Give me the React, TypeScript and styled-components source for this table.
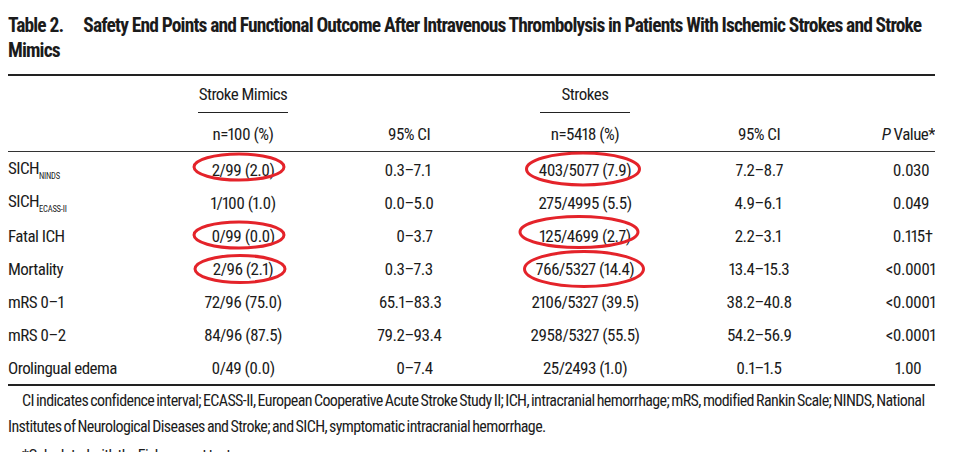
import React from "react";
import styled, { createGlobalStyle } from "styled-components";

const GlobalStyle = createGlobalStyle`
  html, body {
    margin: 0;
    padding: 0;
    background: #ffffff;
  }
  body {
    font-family: "Roboto Condensed", "Liberation Sans", sans-serif;
    font-variant-numeric: proportional-nums;
    color: #1b1b1b;
  }
`;

const Page = styled.main`
  width: 927px;
  padding: 13px 0 0 8px;
  overflow: hidden;
  height: 439px;
`;

const Title = styled.h1`
  margin: 0;
  font-size: 19.5px;
  line-height: 25px;
  font-weight: 700;
  letter-spacing: -0.85px;
  padding-bottom: 11px;
  border-bottom: 2.5px solid #222;
`;

const TitleLabel = styled.span`
  margin-right: 20px;
`;

const Row = styled.div<{ $height?: number }>`
  display: grid;
  grid-template-columns: 160px 150px 182px 170px 178px 87px;
  align-items: center;
  height: ${(p) => p.$height ?? 33}px;
  font-size: 17px;
  letter-spacing: -0.55px;
`;

const HeadRow = styled(Row)`
  border-bottom: 1px solid #333;
  margin-bottom: 1px;
`;

const Cell = styled.div<{ $align?: "left" | "center" | "right" }>`
  position: relative;
  text-align: ${(p) => p.$align ?? "center"};
  white-space: nowrap;
`;

const GroupHead = styled.span`
  display: inline-block;
  margin-top: 5px;
  padding: 0 1px 8px;
  border-bottom: 1.5px solid #222;
`;

const WideGroupHead = styled(GroupHead)`
  padding: 0 22px 8px;
`;

const Sub = styled.sub`
  font-size: 8.5px;
  vertical-align: -5px;
  letter-spacing: -0.2px;
`;

const Range = styled.div`
  display: grid;
  grid-template-columns: 1fr auto 1fr;
  white-space: nowrap;
`;

const RangeLow = styled.span`
  text-align: right;
`;

const RangeHigh = styled.span`
  text-align: left;
`;

const Decimal = styled.div`
  display: grid;
  grid-template-columns: 53px 1fr;
  white-space: nowrap;
`;

const DecimalInt = styled.span`
  text-align: right;
`;

const DecimalFrac = styled.span`
  text-align: left;
`;

const Ring = styled.svg`
  position: absolute;
  left: 50%;
  top: 50%;
  pointer-events: none;
  overflow: visible;
`;

const Italic = styled.i``;

const Notes = styled.div`
  border-top: 2.5px solid #222;
  padding-top: 2px;
  font-size: 16px;
  line-height: 26px;
  letter-spacing: -0.6px;
  word-spacing: -1px;
`;

const Note = styled.p<{ $indent?: boolean }>`
  margin: 0;
  text-indent: ${(p) => (p.$indent ? "14px" : "0")};

  & + & {
    margin-top: 3px;
  }
`;

type Circle = { w: number; h: number; dx: number; dy: number };

const Circled = ({ c }: { c: Circle }) => (
  <Ring
    width={c.w}
    height={c.h}
    style={{ transform: `translate(calc(-50% + ${c.dx}px), calc(-50% + ${c.dy}px))` }}
  >
    <ellipse cx={c.w / 2} cy={c.h / 2} rx={c.w / 2 - 1.5} ry={c.h / 2 - 1.5} fill="none" stroke="#e4232a" strokeWidth={3} />
  </Ring>
);

const RangeCell = ({ v }: { v: string }) => {
  const [a, b] = v.split("–");
  return (
    <Range>
      <RangeLow>{a}</RangeLow>
      <span>–</span>
      <RangeHigh>{b}</RangeHigh>
    </Range>
  );
};

const PCell = ({ v }: { v: string }) => {
  const i = v.indexOf(".");
  return (
    <Decimal>
      <DecimalInt>{v.slice(0, i)}</DecimalInt>
      <DecimalFrac>{v.slice(i)}</DecimalFrac>
    </Decimal>
  );
};

type DataRow = {
  label: React.ReactNode;
  mimics: string;
  ci1: string;
  strokes: string;
  ci2: string;
  p: string;
  ring1?: Circle;
  ring2?: Circle;
};

const rows: DataRow[] = [
  {
    label: (
      <>
        SICH<Sub>NINDS</Sub>
      </>
    ),
    mimics: "2/99 (2.0)",
    ci1: "0.3–7.1",
    strokes: "403/5077 (7.9)",
    ci2: "7.2–8.7",
    p: "0.030",
    ring1: { w: 93, h: 29, dx: -4, dy: -3 },
    ring2: { w: 116, h: 35, dx: -2, dy: -1 },
  },
  {
    label: (
      <>
        SICH<Sub>ECASS-II</Sub>
      </>
    ),
    mimics: "1/100 (1.0)",
    ci1: "0.0–5.0",
    strokes: "275/4995 (5.5)",
    ci2: "4.9–6.1",
    p: "0.049",
  },
  {
    label: "Fatal ICH",
    mimics: "0/99 (0.0)",
    ci1: "0–3.7",
    strokes: "125/4699 (2.7)",
    ci2: "2.2–3.1",
    p: "0.115†",
    ring1: { w: 93, h: 29, dx: -4, dy: -1 },
    ring2: { w: 121, h: 34, dx: -6, dy: -4 },
  },
  {
    label: "Mortality",
    mimics: "2/96 (2.1)",
    ci1: "0.3–7.3",
    strokes: "766/5327 (14.4)",
    ci2: "13.4–15.3",
    p: "<0.0001",
    ring1: { w: 93, h: 30, dx: -3, dy: 0 },
    ring2: { w: 122, h: 38, dx: -1, dy: 0 },
  },
  {
    label: "mRS 0–1",
    mimics: "72/96 (75.0)",
    ci1: "65.1–83.3",
    strokes: "2106/5327 (39.5)",
    ci2: "38.2–40.8",
    p: "<0.0001",
  },
  {
    label: "mRS 0–2",
    mimics: "84/96 (87.5)",
    ci1: "79.2–93.4",
    strokes: "2958/5327 (55.5)",
    ci2: "54.2–56.9",
    p: "<0.0001",
  },
  {
    label: "Orolingual edema",
    mimics: "0/49 (0.0)",
    ci1: "0–7.4",
    strokes: "25/2493 (1.0)",
    ci2: "0.1–1.5",
    p: "1.00",
  },
];

export default function App() {
  return (
    <Page>
      <GlobalStyle />
      <Title>
        <TitleLabel>Table 2.</TitleLabel>
        Safety End Points and Functional Outcome After Intravenous Thrombolysis in Patients With Ischemic Strokes and Stroke
        <br />
        Mimics
      </Title>
      <Row $height={40}>
        <Cell />
        <Cell>
          <GroupHead>Stroke Mimics</GroupHead>
        </Cell>
        <Cell />
        <Cell>
          <WideGroupHead>Strokes</WideGroupHead>
        </Cell>
        <Cell />
        <Cell />
      </Row>
      <HeadRow $height={35}>
        <Cell />
        <Cell>n=100 (%)</Cell>
        <Cell>95% CI</Cell>
        <Cell>n=5418 (%)</Cell>
        <Cell>95% CI</Cell>
        <Cell $align="right">
          <Italic>P</Italic> Value*
        </Cell>
      </HeadRow>
      {rows.map((r, index) => (
        <Row key={index}>
          <Cell $align="left">{r.label}</Cell>
          <Cell>
            {r.mimics}
            {r.ring1 && <Circled c={r.ring1} />}
          </Cell>
          <Cell>
            <RangeCell v={r.ci1} />
          </Cell>
          <Cell>
            {r.strokes}
            {r.ring2 && <Circled c={r.ring2} />}
          </Cell>
          <Cell>
            <RangeCell v={r.ci2} />
          </Cell>
          <Cell>
            <PCell v={r.p} />
          </Cell>
        </Row>
      ))}
      <Notes>
        <Note $indent>
          CI indicates confidence interval; ECASS-II, European Cooperative Acute Stroke Study II; ICH, intracranial hemorrhage; mRS, modified Rankin Scale; NINDS, National Institutes of Neurological Diseases and Stroke; and SICH, symptomatic intracranial hemorrhage.
        </Note>
        <Note $indent>*Calculated with the Fisher exact test.</Note>
      </Notes>
    </Page>
  );
}
